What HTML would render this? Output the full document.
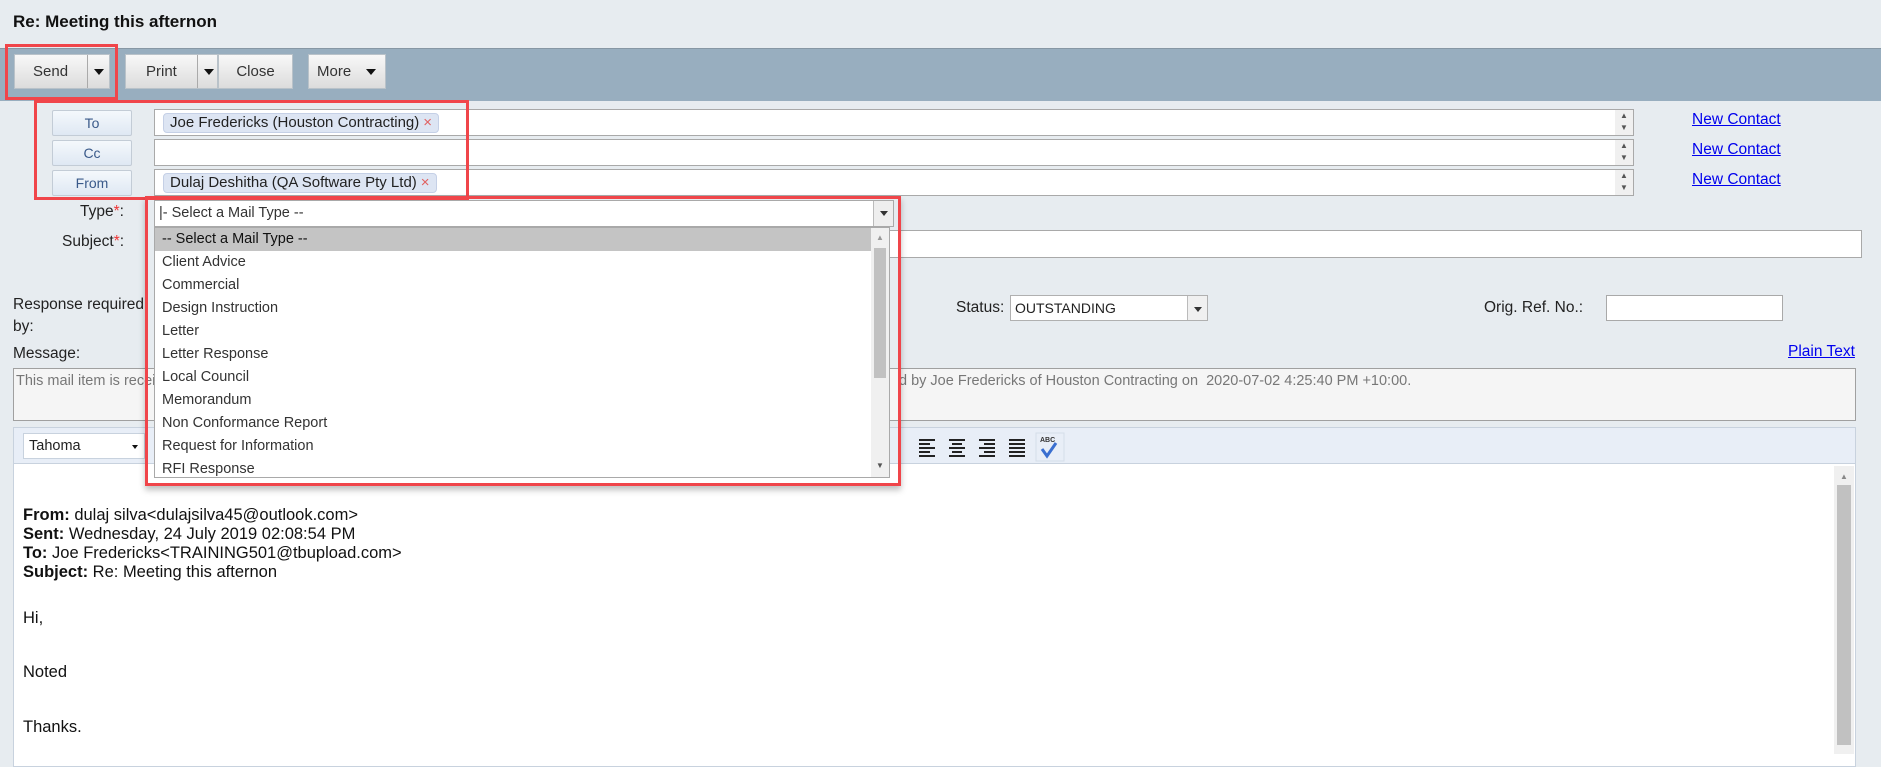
<!DOCTYPE html>
<html><head><meta charset="utf-8"><style>
*{box-sizing:border-box;margin:0;padding:0}
body{width:1881px;height:754px;overflow:hidden;background:#e7ecf0;font-family:"Liberation Sans",sans-serif;font-size:15.5px;color:#222;position:relative}
.a{position:absolute}
.btn{position:absolute;top:54px;height:35px;background:linear-gradient(#f8f8f8,#dcdcdc);border:1px solid #b9c2c9;font-size:15px;color:#333;text-align:center;line-height:33px}
.tri{display:inline-block;width:0;height:0;border-left:5px solid transparent;border-right:5px solid transparent;border-top:6px solid #111;vertical-align:middle}
.rb{position:absolute;border:3px solid #f0454a}
.lb{position:absolute;left:52px;width:80px;height:26px;background:linear-gradient(#f4f8fc,#dfe8f3);border:1px solid #c3ccd6;border-radius:2px;color:#3a5a8a;font-size:14px;text-align:center;line-height:24px}
.in{position:absolute;left:154px;width:1480px;height:27px;background:#fff;border:1px solid #a9a9a9}
.spin{position:absolute;right:0;top:0;width:18px;height:25px;background:#f0f0f0;font-size:8px;color:#555;text-align:center;line-height:12px}
.tag{position:absolute;left:8px;top:3px;height:20px;background:#dde5f3;border:1px solid #c5d0e6;border-radius:4px;padding:0 6px;font-size:15px;line-height:18px;color:#222}
.tag b{color:#e06060;font-weight:normal;margin-left:4px}
.nc{position:absolute;left:1692px;color:#0000ee;text-decoration:underline;font-size:15.5px}
.dd div{height:23px;line-height:23px;padding-left:7px;font-size:14.5px;color:#333}
.ed{position:absolute;left:23px;font-size:16.5px;color:#111}
</style></head><body>
<div class="a" style="left:13px;top:12px;font-weight:bold;font-size:17px;color:#111">Re: Meeting this afternon</div>
<div class="a" style="left:0;top:48px;width:1881px;height:53px;background:#98aebf;border-top:1px solid #8797a4"></div>
<div class="btn" style="left:14px;width:96px"><span style="position:absolute;left:18px">Send</span><span style="position:absolute;left:72px;top:0;height:33px;border-left:1px solid #aaa;width:22px"><span class="tri"></span></span></div>
<div class="btn" style="left:125px;width:93px"><span style="position:absolute;left:20px">Print</span><span style="position:absolute;left:71px;top:0;height:33px;border-left:1px solid #aaa;width:22px"><span class="tri"></span></span></div>
<div class="btn" style="left:218px;width:75px">Close</div>
<div class="btn" style="left:308px;width:78px"><span style="position:absolute;left:8px">More</span><span class="tri" style="position:absolute;left:57px;top:14px"></span></div>
<div class="rb" style="left:5px;top:44px;width:113px;height:56px"></div>

<div class="lb" style="top:110px">To</div>
<div class="lb" style="top:140px">Cc</div>
<div class="lb" style="top:170px">From</div>
<div class="in" style="top:109px"><div class="tag">Joe Fredericks (Houston Contracting)<b>×</b></div><div class="spin">▲<br>▼</div></div>
<div class="in" style="top:139px"><div class="spin">▲<br>▼</div></div>
<div class="in" style="top:169px"><div class="tag">Dulaj Deshitha (QA Software Pty Ltd)<b>×</b></div><div class="spin">▲<br>▼</div></div>
<div class="nc" style="top:111px">New Contact</div>
<div class="nc" style="top:141px">New Contact</div>
<div class="nc" style="top:171px">New Contact</div>
<div class="rb" style="left:34px;top:100px;width:435px;height:100px"></div>

<div class="a" style="left:80px;top:203px">Type<span style="color:#e33">*</span>:</div>
<div class="a" style="left:62px;top:233px">Subject<span style="color:#e33">*</span>:</div>
<div class="a" style="left:154px;top:230px;width:1708px;height:28px;background:#fff;border:1px solid #a9a9a9"></div>
<div class="a" style="left:13px;top:294px;line-height:22px">Response required<br>by:</div>
<div class="a" style="left:956px;top:299px">Status:</div>
<div class="a" style="left:1010px;top:295px;width:198px;height:26px;background:#fff;border:1px solid #b0b0b0;font-size:14px;line-height:24px;padding-left:4px;color:#222">OUTSTANDING<div style="position:absolute;right:0;top:0;width:20px;height:24px;background:#f0f0f0;border-left:1px solid #bbb;text-align:center"><span class="tri" style="border-top-color:#333;border-width:5px 4px 0"></span></div></div>
<div class="a" style="left:1484px;top:299px">Orig. Ref. No.:</div>
<div class="a" style="left:1606px;top:295px;width:177px;height:26px;background:#fff;border:1px solid #a9a9a9"></div>
<div class="a" style="left:13px;top:345px">Message:</div>
<div class="a" style="left:1788px;top:343px;color:#0000ee;text-decoration:underline">Plain Text</div>
<div class="a" style="left:13px;top:368px;width:1843px;height:53px;background:#f5f5f5;border:1px solid #a0a0a0;color:#777;font-size:14.5px;padding:4px 2px">This mail item is received<span style="position:absolute;left:885px;top:4px">d by Joe Fredericks of Houston Contracting on&nbsp; 2020-07-02 4:25:40 PM +10:00.</span></div>

<div class="a" style="left:13px;top:427px;width:1843px;height:340px;background:#fff;border:1px solid #c8d2de"></div>
<div class="a" style="left:14px;top:428px;width:1841px;height:36px;background:#e8eef7;border-bottom:1px solid #c8d2de"></div>
<div class="a" style="left:23px;top:433px;width:122px;height:26px;background:#fff;border:1px solid #c8d2de;font-size:14.5px;line-height:24px;padding-left:5px">Tahoma<span class="tri" style="position:absolute;right:6px;top:11px;border-width:4px 3px 0"></span></div>
<div class="a" style="left:905px;top:432px;width:170px;height:28px;background:#e8eef7"></div>
<svg class="a" style="left:910px;top:432px" width="170" height="30">
<g stroke="#222" stroke-width="2">
<path d="M9 8h16M9 12h11M9 16h16M9 20h11M9 24h16"/>
<path d="M39 8h16M42 12h10M39 16h16M42 20h10M39 24h16"/>
<path d="M69 8h16M74 12h11M69 16h16M74 20h11M69 24h16"/>
<path d="M99 8h16M99 12h16M99 16h16M99 20h16M99 24h16"/>
</g>
<rect x="126" y="1" width="28" height="28" fill="none" stroke="#d5dde8"/>
<text x="130" y="10" font-size="7" font-family="Liberation Sans" font-weight="bold" fill="#333">ABC</text>
<path d="M132 17l5 7 9-13" stroke="#3a6fd0" stroke-width="3" fill="none"/>
</svg>
<div class="a" style="left:1834px;top:466px;width:20px;height:288px;background:#f0f0f0"><div style="font-size:8px;color:#888;text-align:center;margin-top:6px">▲</div><div style="margin:4px 3px;height:260px;background:#c1c1c1"></div></div>
<div class="ed" style="top:506px"><b>From:</b> dulaj silva&lt;dulajsilva45@outlook.com&gt;</div>
<div class="ed" style="top:525px"><b>Sent:</b> Wednesday, 24 July 2019 02:08:54 PM</div>
<div class="ed" style="top:544px"><b>To:</b> Joe Fredericks&lt;TRAINING501@tbupload.com&gt;</div>
<div class="ed" style="top:563px"><b>Subject:</b> Re: Meeting this afternon</div>
<div class="ed" style="top:609px">Hi,</div>
<div class="ed" style="top:663px">Noted</div>
<div class="ed" style="top:718px">Thanks.</div>

<div class="a" style="left:154px;top:200px;width:740px;height:27px;background:#fff;border:1px solid #a9a9a9;font-size:14.5px;line-height:25px;padding-left:4px;color:#333">|- Select a Mail Type --<div style="position:absolute;right:0;top:0;width:20px;height:25px;background:#eee;border-left:1px solid #bbb;text-align:center"><span class="tri" style="border-top-color:#333;border-width:5px 4px 0"></span></div></div>
<div class="a dd" style="left:154px;top:227px;width:736px;height:251px;background:#fff;border:1px solid #a9a9a9;overflow:hidden">
<div style="background:#c4c4c4;margin-right:18px;color:#111">-- Select a Mail Type --</div>
<div>Client Advice</div><div>Commercial</div><div>Design Instruction</div><div>Letter</div><div>Letter Response</div><div>Local Council</div><div>Memorandum</div><div>Non Conformance Report</div><div>Request for Information</div><div>RFI Response</div>
<div style="position:absolute;right:0;top:0;width:18px;height:249px;background:#f0f0f0;padding:0"><div style="font-size:8px;color:#999;text-align:center;height:20px;line-height:20px;padding:0">▲</div><div style="margin:0 3px;height:130px;background:#c1c1c1;padding:0"></div><div style="position:absolute;bottom:0;left:0;width:18px;font-size:8px;color:#555;text-align:center;padding:0">▼</div></div>
</div>
<div class="rb" style="left:145px;top:196px;width:756px;height:290px;box-shadow:0 4px 6px rgba(0,0,0,.25)"></div>
</body></html>
